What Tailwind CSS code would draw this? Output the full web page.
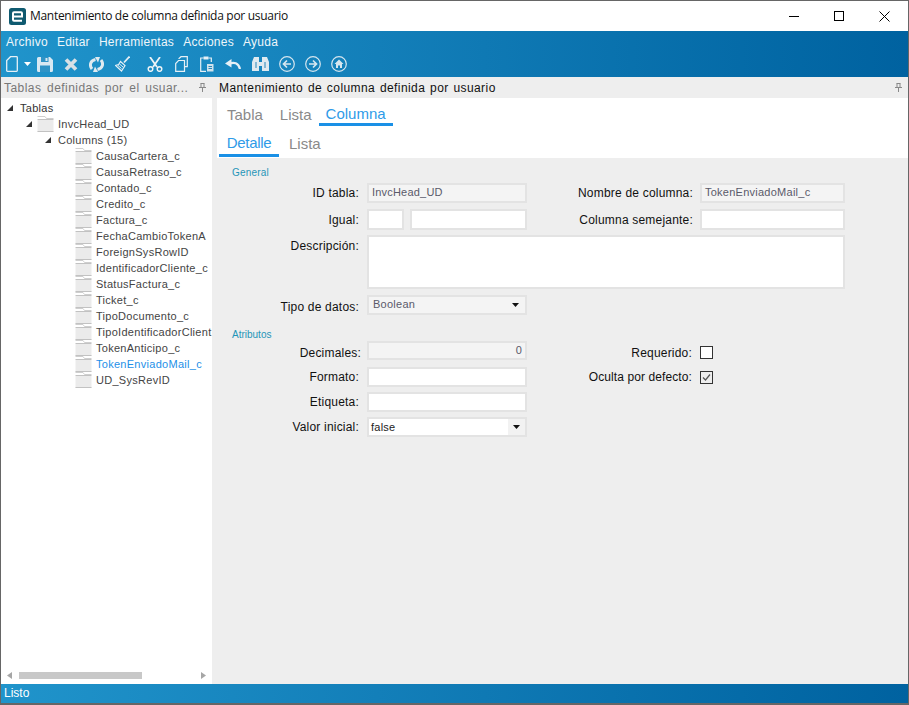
<!DOCTYPE html>
<html lang="es">
<head>
    <meta charset="UTF-8">
    <title>Mantenimiento de columna definida por usuario</title>
    <script src="https://cdn.jsdelivr.net/npm/@tailwindcss/browser@4"></script>
</head>
<body class="bg-[#666666] font-['Liberation_Sans',Arial,sans-serif] overflow-hidden">
    <!-- icono de hoja del arbol, se repite con use -->
    <svg class="hidden">
        <symbol id="doc" viewBox="0 0 16 16">
            <path d="M0 4h16v12H0z" fill="#ebebeb"/>
            <path d="M0 .5h7.500L9 2.500H16" fill="none" stroke="#cfcfcf"/>
            <path d="M0 3.500h16M0 15.500h16" stroke="#c2c2c2"/>
        </symbol>
        <symbol id="arrow" viewBox="0 0 6 6"><path d="M6 0v6H0z" fill="#333"/></symbol>
    </svg>

    <div class="w-[909px] h-[705px] pt-px pl-px pr-px pb-[2px] flex flex-col">
        <!-- barra de titulo -->
        <header class="h-[30px] bg-white flex items-center shrink-0">
            <svg class="ml-[8px] w-[17px] h-[17px]" viewBox="0 0 17 17">
                <rect width="17" height="17" rx="2.500" fill="#0f5a70"/>
                <path d="M4 8.500h9V5.200a1 1 0 0 0-1-1H5a1 1 0 0 0-1 1v6.600a1 1 0 0 0 1 1h8" fill="none" stroke="#fff" stroke-width="2"/>
            </svg>
            <span class="ml-[4px] text-[12px] text-[#111] font-['Open_Sans',sans-serif] tracking-[-0.3px]">Mantenimiento de columna definida por usuario</span>
            <div class="ml-auto flex items-center">
                <div class="w-[10px] h-px bg-black mr-[35px]"></div>
                <div class="w-[10px] h-[10px] border border-black mr-[35px]"></div>
                <svg class="w-[11px] h-[11px] mr-[18px]" viewBox="0 0 11 11"><path d="M.5.5l10 10M10.500.5l-10 10" stroke="#000" fill="none"/></svg>
            </div>
        </header>

        <!-- menu y barra de herramientas -->
        <div class="h-[46px] shrink-0 bg-gradient-to-r from-[#2094cb] to-[#0062a0] text-white">
            <nav class="h-[21px] pt-[4px] pl-[5px] flex gap-[9px] text-[12px] leading-[14px] tracking-[0.27px] text-[#eef6fa]">
                <span>Archivo</span><span>Editar</span><span>Herramientas</span><span>Acciones</span><span>Ayuda</span>
            </nav>
            <div class="h-[25px] flex items-center pl-[5px] pb-[1px]">
                <!-- nuevo -->
                <svg class="w-[12px] h-[16px]" viewBox="0 0 12 16"><path d="M4.500.7h6a.8.8 0 0 1 .8.8v13a.8.8 0 0 1-.8.8h-9a.8.8 0 0 1-.8-.8V4.500z" fill="none" stroke="#e6f0f6" stroke-width="1.300"/></svg>
                <svg class="ml-[6px] w-[7px] h-[4px]" viewBox="0 0 7 4"><path d="M0 0h7L3.500 4z" fill="#fff"/></svg>
                <!-- guardar -->
                <svg class="ml-[6px] w-[16px] h-[15px]" viewBox="0 0 16 15"><path d="M0 1.500A1.500 1.500 0 0 1 1.500 0H13l3 3v10.500a1.500 1.500 0 0 1-1.500 1.500h-13A1.500 1.500 0 0 1 0 13.500z" fill="#d8e8f2"/><path d="M4 0h7.500v5H4z" fill="#2f93c6"/><path d="M8.500 1h2v3h-2z" fill="#d8e8f2"/><path d="M3 8.500h10V15H3z" fill="#2f93c6"/></svg>
                <!-- borrar -->
                <svg class="ml-[11px] w-[14px] h-[13px]" viewBox="0 0 14 13"><path d="M2 1.500l10 10M12 1.500l-10 10" stroke="#d9e0e5" stroke-width="3.800" fill="none"/></svg>
                <!-- refrescar -->
                <svg class="ml-[11px] w-[15px] h-[15px]" viewBox="0 0 15 15"><path d="M3 12C.3 8.500 1 3.500 6.500 2.500M12 3c2.700 3.500 2 8.500-3.500 9.500" fill="none" stroke="#dfeaf0" stroke-width="3"/><path d="M6 0h5l-2 5.500zM9 15H4l2-5.500z" fill="#dfeaf0"/></svg>
                <!-- limpiar -->
                <svg class="ml-[11px] w-[15px] h-[16px]" viewBox="0 0 15 16"><path d="M9 6.500L14.500.5" stroke="#e6f0f6" stroke-width="1.700"/><path d="M5.500 5.500l4.500 4-3.500 5.500L.5 9.500l3 -.8z" fill="none" stroke="#e6f0f6" stroke-width="1.200"/><path d="M3 9.500l3.500 3M4.500 8l3.500 3" stroke="#e6f0f6"/></svg>
                <!-- cortar -->
                <svg class="ml-[17px] w-[16px] h-[15px]" viewBox="0 0 16 15"><path d="M3 0l7 10M13 0L6 10" stroke="#edf3f6" stroke-width="1.800" fill="none"/><circle cx="3.500" cy="12" r="2.300" fill="none" stroke="#edf3f6" stroke-width="1.500"/><circle cx="12.500" cy="12" r="2.300" fill="none" stroke="#edf3f6" stroke-width="1.500"/></svg>
                <!-- copiar -->
                <svg class="ml-[12px] w-[13px] h-[16px]" viewBox="0 0 13 16"><path d="M4 3V2.500L6 .7h6.300v10H10" fill="none" stroke="#e6f0f6" stroke-width="1.200"/><path d="M3.500 4.500h6v10.800H.7V7.500z" fill="none" stroke="#e6f0f6" stroke-width="1.200"/></svg>
                <!-- pegar -->
                <svg class="ml-[12px] w-[14px] h-[16px]" viewBox="0 0 14 16"><path d="M3.500 2H.7v13.300H6M8.500 2h2.800v4" fill="none" stroke="#e6f0f6" stroke-width="1.200"/><path d="M3.500 .5h5v3h-5z" fill="#e6f0f6"/><path d="M7 8h6.500v7.500H7z" fill="#cfe2ec"/><path d="M8.500 10.500h3.500M8.500 12.500h3.500" stroke="#2a87b8"/></svg>
                <!-- deshacer -->
                <svg class="ml-[11px] w-[16px] h-[10px]" viewBox="0 0 16 10"><path d="M15 10C13.500 4 9 2.500 4 5" fill="none" stroke="#e6f0f6" stroke-width="2.300"/><path d="M0 4.500l6.500-4.500v8.500z" fill="#e6f0f6"/></svg>
                <!-- buscar -->
                <svg class="ml-[11px] w-[17px] h-[14px]" viewBox="0 0 17 14"><path d="M2 0h5v14H0V5zM10 0h5l2 5v9h-7z" fill="#dfeaf0"/><path d="M7 5h3v4H7z" fill="#dfeaf0"/><path d="M4 5v6M13 5v6" stroke="#2a87b8"/></svg>
                <!-- atras -->
                <svg class="ml-[10px] w-[16px] h-[16px]" viewBox="0 0 16 16"><circle cx="8" cy="8" r="7.300" fill="none" stroke="#d6e6ef" stroke-width="1.200"/><path d="M12 8H5M8 4.500L4.500 8 8 11.500" fill="none" stroke="#d6e6ef" stroke-width="1.700"/></svg>
                <!-- adelante -->
                <svg class="ml-[10px] w-[16px] h-[16px]" viewBox="0 0 16 16"><circle cx="8" cy="8" r="7.300" fill="none" stroke="#d6e6ef" stroke-width="1.200"/><path d="M4 8h7M8 4.500L11.500 8 8 11.500" fill="none" stroke="#d6e6ef" stroke-width="1.700"/></svg>
                <!-- inicio -->
                <svg class="ml-[10px] w-[16px] h-[16px]" viewBox="0 0 16 16"><circle cx="8" cy="8" r="7.300" fill="none" stroke="#d6e6ef" stroke-width="1.200"/><path d="M8 3.500L3.500 8H5v4h2V9.500h2V12h2V8h1.500z" fill="#d6e6ef"/></svg>
            </div>
        </div>

        <!-- cuerpo -->
        <div class="flex-1 flex bg-[#eeeeee] min-h-0">
            <!-- panel del arbol -->
            <aside class="w-[211px] flex flex-col shrink-0">
                <div class="h-[21px] flex items-center pl-[3px] text-[12px] text-[#777] tracking-[0.44px] [word-spacing:2px]">
                    <span>Tablas definidas por el usuar...</span>
                    <svg class="ml-auto mr-[6px] w-[7px] h-[9px]" viewBox="0 0 7 9"><path d="M1.500.5h4M2 .5v4M5 .5v4M0 4.500h7M3.500 4.500V9" stroke="#888" fill="none"/></svg>
                </div>
                <div class="flex-1 bg-white relative text-[11px] text-[#444] tracking-[0.28px] leading-[16px] pt-[2px] overflow-hidden whitespace-nowrap">
                    <div class="h-[16px] flex items-center pl-[6px] text-[#333]"><svg class="w-[6px] h-[6px]"><use href="#arrow"/></svg><span class="ml-[7px]">Tablas</span></div>
                    <div class="h-[16px] flex items-center pl-[25px]"><svg class="w-[6px] h-[6px]"><use href="#arrow"/></svg><svg class="ml-[5px] w-[17px] h-[16px]"><use href="#doc"/></svg><span class="ml-[4px]">InvcHead_UD</span></div>
                    <div class="h-[16px] flex items-center pl-[44px]"><svg class="w-[6px] h-[6px]"><use href="#arrow"/></svg><span class="ml-[7px]">Columns (15)</span></div>
                    <ul class="pl-[74px]">
                        <li class="h-[16px] flex items-center"><svg class="w-[17px] h-[16px] shrink-0"><use href="#doc"/></svg><span class="ml-[4px]">CausaCartera_c</span></li>
                        <li class="h-[16px] flex items-center"><svg class="w-[17px] h-[16px] shrink-0"><use href="#doc"/></svg><span class="ml-[4px]">CausaRetraso_c</span></li>
                        <li class="h-[16px] flex items-center"><svg class="w-[17px] h-[16px] shrink-0"><use href="#doc"/></svg><span class="ml-[4px]">Contado_c</span></li>
                        <li class="h-[16px] flex items-center"><svg class="w-[17px] h-[16px] shrink-0"><use href="#doc"/></svg><span class="ml-[4px]">Credito_c</span></li>
                        <li class="h-[16px] flex items-center"><svg class="w-[17px] h-[16px] shrink-0"><use href="#doc"/></svg><span class="ml-[4px]">Factura_c</span></li>
                        <li class="h-[16px] flex items-center"><svg class="w-[17px] h-[16px] shrink-0"><use href="#doc"/></svg><span class="ml-[4px]">FechaCambioTokenA</span></li>
                        <li class="h-[16px] flex items-center"><svg class="w-[17px] h-[16px] shrink-0"><use href="#doc"/></svg><span class="ml-[4px]">ForeignSysRowID</span></li>
                        <li class="h-[16px] flex items-center"><svg class="w-[17px] h-[16px] shrink-0"><use href="#doc"/></svg><span class="ml-[4px]">IdentificadorCliente_c</span></li>
                        <li class="h-[16px] flex items-center"><svg class="w-[17px] h-[16px] shrink-0"><use href="#doc"/></svg><span class="ml-[4px]">StatusFactura_c</span></li>
                        <li class="h-[16px] flex items-center"><svg class="w-[17px] h-[16px] shrink-0"><use href="#doc"/></svg><span class="ml-[4px]">Ticket_c</span></li>
                        <li class="h-[16px] flex items-center"><svg class="w-[17px] h-[16px] shrink-0"><use href="#doc"/></svg><span class="ml-[4px]">TipoDocumento_c</span></li>
                        <li class="h-[16px] flex items-center"><svg class="w-[17px] h-[16px] shrink-0"><use href="#doc"/></svg><span class="ml-[4px]">TipoIdentificadorClient</span></li>
                        <li class="h-[16px] flex items-center"><svg class="w-[17px] h-[16px] shrink-0"><use href="#doc"/></svg><span class="ml-[4px]">TokenAnticipo_c</span></li>
                        <li class="h-[16px] flex items-center text-[#1e90e8]"><svg class="w-[17px] h-[16px] shrink-0"><use href="#doc"/></svg><span class="ml-[4px]">TokenEnviadoMail_c</span></li>
                        <li class="h-[16px] flex items-center"><svg class="w-[17px] h-[16px] shrink-0"><use href="#doc"/></svg><span class="ml-[4px]">UD_SysRevID</span></li>
                    </ul>
                    <!-- scroll horizontal -->
                    <div class="absolute left-[6px] bottom-[5px] flex items-center">
                        <svg class="w-[5px] h-[7px]" viewBox="0 0 5 7"><path d="M5 0v7L0 3.500z" fill="#a6a6a6"/></svg>
                        <div class="ml-[7px] w-[123px] h-[7px] bg-[#c8c8c8]"></div>
                        <svg class="ml-[59px] w-[5px] h-[7px]" viewBox="0 0 5 7"><path d="M0 0v7l5-3.500z" fill="#a6a6a6"/></svg>
                    </div>
                </div>
            </aside>

            <!-- panel principal -->
            <main class="ml-[5px] flex-1 flex flex-col min-w-0">
                <div class="h-[21px] flex items-center pl-[2px] text-[12px] text-[#111] tracking-[0.42px] [word-spacing:1px] shrink-0">
                    <span>Mantenimiento de columna definida por usuario</span>
                    <svg class="ml-auto mr-[6px] w-[7px] h-[9px]" viewBox="0 0 7 9"><path d="M1.500.5h4M2 .5v4M5 .5v4M0 4.500h7M3.500 4.500V9" stroke="#888" fill="none"/></svg>
                </div>
                <div class="h-[60px] bg-white shrink-0 text-[15px] leading-[18px] text-[#8a8a8a]">
                    <div class="h-[29px] flex pl-[10px] pt-[8px]">
                        <span>Tabla</span>
                        <span class="ml-[17px]">Lista</span>
                        <span class="ml-[7px] -mt-[1px] h-[21px] px-[7px] border-b-[3px] border-[#1a90e6] text-[#2f9be8]">Columna</span>
                    </div>
                    <div class="h-[31px] flex pt-[8px] pl-[2px]">
                        <span class="w-[60px] text-center tracking-[-0.3px] h-[23px] -mt-[1px] pb-[2px] border-b-[3px] border-[#1a90e6] text-[#2f9be8]">Detalle</span>
                        <span class="ml-[10px]">Lista</span>
                    </div>
                </div>

                <form class="flex-1 pl-[15px] text-[12px] text-[#111] tracking-[0.2px]">
                    <p class="pt-[8px] h-[25px] text-[10px] leading-[13px] text-[#1f95b8]">General</p>
                    <div class="flex items-center h-[20px]">
                        <label class="w-[135px] pr-[8px] text-right">ID tabla:</label>
                        <div class="w-[160px] h-[20px] border-2 border-[#e3e3e3] bg-[#f4f4f4] pl-[3px] text-[11px] leading-[14px] text-[#5a5a6a]">InvcHead_UD</div>
                        <label class="w-[173px] pr-[7px] text-right">Nombre de columna:</label>
                        <div class="w-[145px] h-[20px] border-2 border-[#e3e3e3] bg-[#f4f4f4] pl-[3px] text-[11px] leading-[14px] text-[#5a5a6a] tracking-[0.25px]">TokenEnviadoMail_c</div>
                    </div>
                    <div class="flex items-center h-[21px] mt-[6px]">
                        <label class="w-[135px] pr-[8px] text-right">Igual:</label>
                        <div class="w-[37px] h-[21px] border-2 border-[#e3e3e3] bg-white"></div>
                        <div class="ml-[6px] w-[117px] h-[21px] border-2 border-[#e3e3e3] bg-white"></div>
                        <label class="w-[173px] pr-[7px] text-right">Columna semejante:</label>
                        <div class="w-[145px] h-[21px] border-2 border-[#e3e3e3] bg-white"></div>
                    </div>
                    <div class="flex mt-[5px] h-[54px]">
                        <label class="w-[135px] pr-[8px] text-right pt-[2px]">Descripción:</label>
                        <div class="w-[478px] border-2 border-[#e3e3e3] bg-white"></div>
                    </div>
                    <div class="flex items-center h-[20px] mt-[6px]">
                        <label class="w-[135px] pr-[8px] text-right pt-[4px]">Tipo de datos:</label>
                        <div class="w-[160px] h-[20px] border-2 border-[#e3e3e3] bg-[#f4f4f4] pl-[4px] pr-[6px] flex items-center justify-between text-[11px] text-[#5a5a6a] tracking-[0.25px]">
                            <span class="-mt-[2px]">Boolean</span>
                            <svg class="w-[7px] h-[4px]" viewBox="0 0 7 4"><path d="M0 0h7L3.500 4z" fill="#111"/></svg>
                        </div>
                    </div>
                    <p class="mt-[13px] h-[13px] text-[10px] leading-[13px] text-[#1f95b8] tracking-normal">Atributos</p>
                    <div class="flex items-center h-[19px]">
                        <label class="w-[136px] pr-[7px] text-right pt-[4px]">Decimales:</label>
                        <div class="-ml-px w-[160px] h-[19px] border-2 border-[#e3e3e3] bg-[#f4f4f4] pr-[3px] text-right text-[11px] leading-[14px] text-[#5a5a6a]">0</div>
                        <label class="w-[173px] pr-[8px] text-right pt-[4px]">Requerido:</label>
                        <div class="w-[13px] h-[13px] mt-[3px] border border-[#333] bg-white"></div>
                    </div>
                    <div class="flex items-center h-[20px] mt-[7px]">
                        <label class="w-[135px] pr-[8px] text-right">Formato:</label>
                        <div class="w-[160px] h-[20px] border-2 border-[#e3e3e3] bg-white"></div>
                        <label class="w-[173px] pr-[8px] text-right tracking-[0.1px]">Oculta por defecto:</label>
                        <div class="w-[13px] h-[13px] border border-[#333] flex items-center justify-center">
                            <svg class="w-[9px] h-[9px]" viewBox="0 0 9 9"><path d="M1 4.500l2.500 2.500L8 1.500" fill="none" stroke="#555" stroke-width="1.200"/></svg>
                        </div>
                    </div>
                    <div class="flex items-center h-[20px] mt-[5px]">
                        <label class="w-[135px] pr-[8px] text-right">Etiqueta:</label>
                        <div class="w-[160px] h-[20px] border-2 border-[#e3e3e3] bg-white"></div>
                    </div>
                    <div class="flex items-center h-[20px] mt-[5px]">
                        <label class="w-[135px] pr-[8px] text-right">Valor inicial:</label>
                        <div class="w-[160px] h-[20px] border-2 border-[#e3e3e3] bg-white pl-[2px] flex items-center justify-between text-[11px] text-[#222] tracking-[0.25px]">
                            <span>false</span>
                            <div class="w-[17px] h-full bg-[#f2f2f2] flex items-center justify-center"><svg class="w-[7px] h-[4px]" viewBox="0 0 7 4"><path d="M0 0h7L3.500 4z" fill="#111"/></svg></div>
                        </div>
                    </div>
                </form>
            </main>
        </div>

        <!-- barra de estado -->
        <footer class="h-[19px] shrink-0 bg-gradient-to-r from-[#2094cb] to-[#0062a0] text-white text-[12px] leading-[19px] pl-[3px]">Listo</footer>
    </div>
</body>
</html>
